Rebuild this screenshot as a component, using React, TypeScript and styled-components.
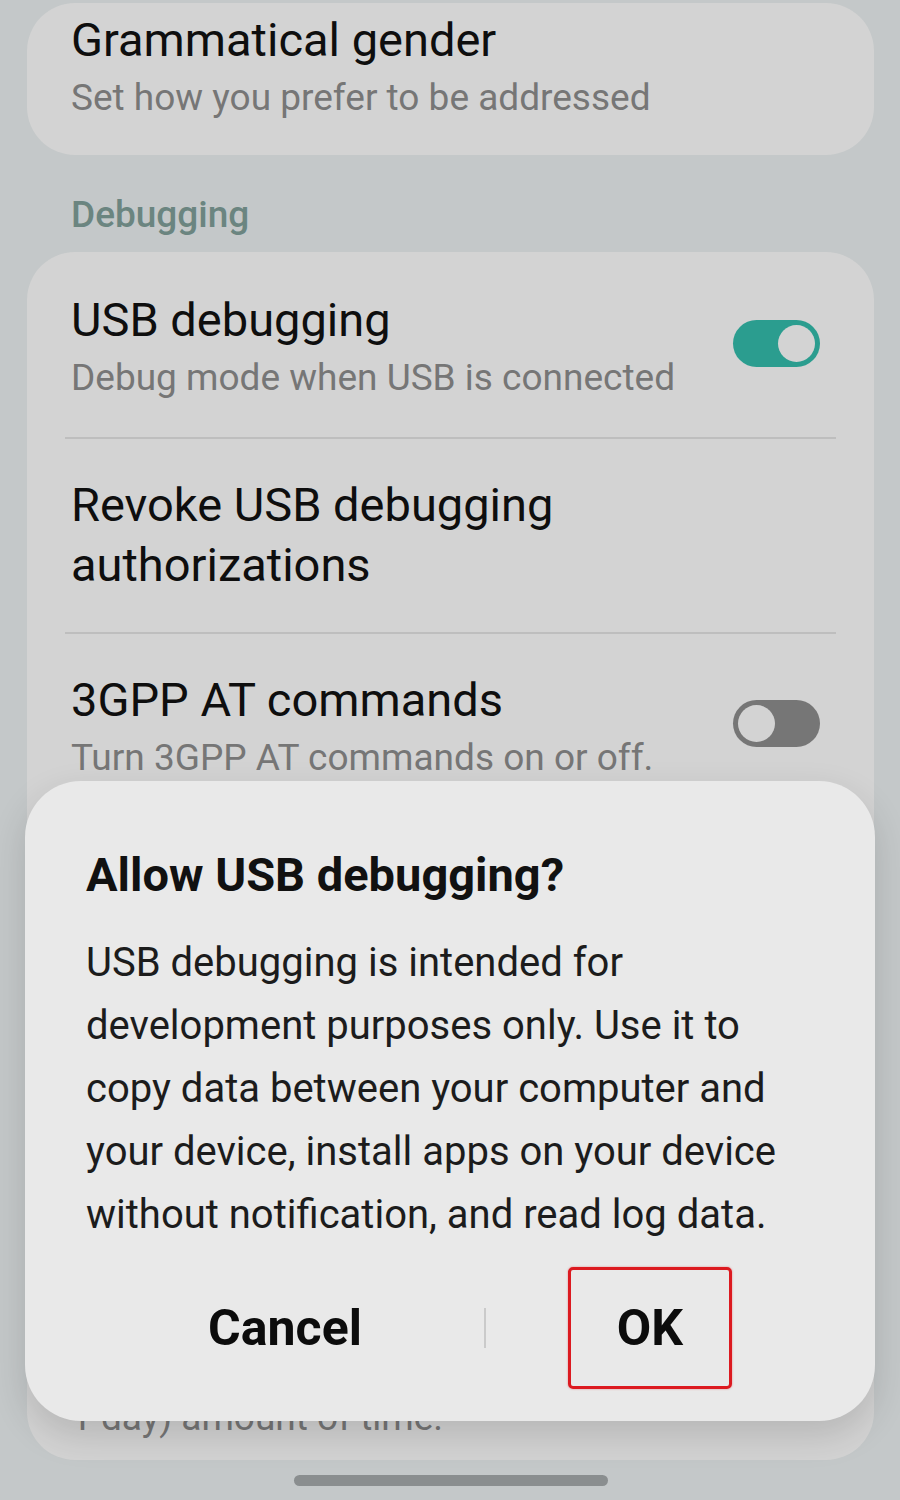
import React from 'react';
import styled, { createGlobalStyle } from 'styled-components';

const GlobalStyle = createGlobalStyle`
  html, body {
    margin: 0;
    padding: 0;
    background: #c4c8c9;
  }
  body {
    font-family: Roboto, "Liberation Sans", sans-serif;
  }
`;

const Screen = styled.div`
  position: relative;
  width: 900px;
  height: 1500px;
  overflow: hidden;
  display: flex;
  flex-direction: column;
  padding: 3px 26px 0 27px;
  box-sizing: border-box;
  background: #c4c8c9;
`;

const Card = styled.div<{ $grow?: boolean }>`
  background: #d3d3d3;
  border-radius: 48px;
  display: flex;
  flex-direction: column;
  overflow: hidden;
  ${(p) => (p.$grow ? 'flex: 1;' : '')}
`;

const SectionHeader = styled.div`
  font-size: 37px;
  font-weight: 500;
  line-height: 50px;
  color: #6b8580;
  padding-left: 44px;
  margin: 35px 0 12px;
`;

const Row = styled.div<{ $last?: boolean; $fill?: boolean; $padTop?: number; $padBottom?: number }>`
  margin: 0 38px;
  padding: ${(p) => `${p.$padTop ?? 36}px 15px ${p.$padBottom ?? 32}px 6px`};
  display: flex;
  align-items: center;
  gap: 24px;
  border-bottom: ${(p) => (p.$last ? 'none' : '2px solid #bebebe')};
  ${(p) => (p.$fill ? 'flex: 1; align-items: flex-end;' : '')}
`;

const RowText = styled.div`
  flex: 1;
  min-width: 0;
  display: flex;
  flex-direction: column;
`;

const Title = styled.div`
  font-size: 47px;
  line-height: 60px;
  color: #0e0e0e;
  white-space: nowrap;
`;

const Subtitle = styled.div`
  font-size: 37px;
  line-height: 56px;
  color: #767676;
  white-space: nowrap;
`;

const Track = styled.div<{ $on: boolean }>`
  flex: 0 0 auto;
  width: 87px;
  height: 47px;
  border-radius: 24px;
  margin: 0 1px 10px 0;
  background: ${(p) => (p.$on ? '#2b9d8f' : '#767676')};
  display: flex;
  align-items: center;
  justify-content: ${(p) => (p.$on ? 'flex-end' : 'flex-start')};
  padding: 0 5px;
  box-sizing: border-box;
`;

const Thumb = styled.div`
  width: 37px;
  height: 37px;
  border-radius: 50%;
  background: #d3d3d3;
`;

const HomeBar = styled.div`
  align-self: center;
  width: 314px;
  height: 11px;
  border-radius: 6px;
  background: #8a8e8f;
  margin: 15px 0 14px;
`;

// Bottom sheet dialog sitting over the settings list
const Dialog = styled.div`
  position: absolute;
  left: 25px;
  right: 25px;
  top: 781px;
  height: 640px;
  box-sizing: border-box;
  background: #e9e9e9;
  border-radius: 56px;
  box-shadow: 0 14px 36px rgba(0, 0, 0, 0.14);
  padding: 64px 30px 0 61px;
  display: flex;
  flex-direction: column;
`;

const DialogTitle = styled.div`
  font-size: 47px;
  font-weight: 700;
  line-height: 60px;
  color: #111;
`;

const DialogBody = styled.div`
  margin-top: 26px;
  font-size: 40px;
  line-height: 63px;
  color: #1c1c1c;
  white-space: nowrap;
`;

const ButtonRow = styled.div`
  margin-top: 21px;
  display: flex;
  align-items: center;
`;

const DialogButton = styled.div<{ $outlined?: boolean }>`
  display: flex;
  align-items: center;
  justify-content: center;
  font-size: 50px;
  font-weight: 700;
  color: #0c0c0c;
  height: 122px;
  box-sizing: border-box;
  ${(p) =>
    p.$outlined
      ? `
    width: 164px;
    margin-left: 82px;
    border: 3px solid #dc1a20;
    border-radius: 5px;
    box-shadow: 0 0 2px rgba(220, 26, 32, 0.5);
  `
      : `
    width: 398px;
  `}
`;

const ButtonDivider = styled.div`
  width: 2px;
  height: 40px;
  background: #cacaca;
`;

type ToggleProps = { on: boolean };
const Toggle = ({ on }: ToggleProps): JSX.Element => (
  <Track $on={on}>
    <Thumb />
  </Track>
);

export default function App(): JSX.Element {
  return (
    <>
      <GlobalStyle />
      <Screen>
        <Card>
          <Row $last $padTop={7} $padBottom={29}>
            <RowText>
              <Title>Grammatical gender</Title>
              <Subtitle>Set how you prefer to be addressed</Subtitle>
            </RowText>
          </Row>
        </Card>

        <SectionHeader>Debugging</SectionHeader>

        <Card $grow>
          <Row $padTop={38} $padBottom={31}>
            <RowText>
              <Title>USB debugging</Title>
              <Subtitle>Debug mode when USB is connected</Subtitle>
            </RowText>
            <Toggle on />
          </Row>
          <Row $padBottom={37}>
            <RowText>
              <Title>
                Revoke USB debugging
                <br />
                authorizations
              </Title>
            </RowText>
          </Row>
          <Row>
            <RowText>
              <Title>3GPP AT commands</Title>
              <Subtitle>Turn 3GPP AT commands on or off.</Subtitle>
            </RowText>
            <Toggle on={false} />
          </Row>
          <Row $last $fill $padBottom={14}>
            <RowText>
              <Title>Disable adb authorization timeout</Title>
              <Subtitle>
                Disable automatic revocation of adb
                <br />
                authorizations for systems that have not
                <br />
                reconnected within the default (7 days) or
                <br />
                user-configured (minimum
                <br />
                1 day) amount of time.
              </Subtitle>
            </RowText>
          </Row>
        </Card>

        <HomeBar />

        <Dialog>
          <DialogTitle>Allow USB debugging?</DialogTitle>
          <DialogBody>
            USB debugging is intended for
            <br />
            development purposes only. Use it to
            <br />
            copy data between your computer and
            <br />
            your device, install apps on your device
            <br />
            without notification, and read log data.
          </DialogBody>
          <ButtonRow>
            <DialogButton>Cancel</DialogButton>
            <ButtonDivider />
            <DialogButton $outlined>OK</DialogButton>
          </ButtonRow>
        </Dialog>
      </Screen>
    </>
  );
}
